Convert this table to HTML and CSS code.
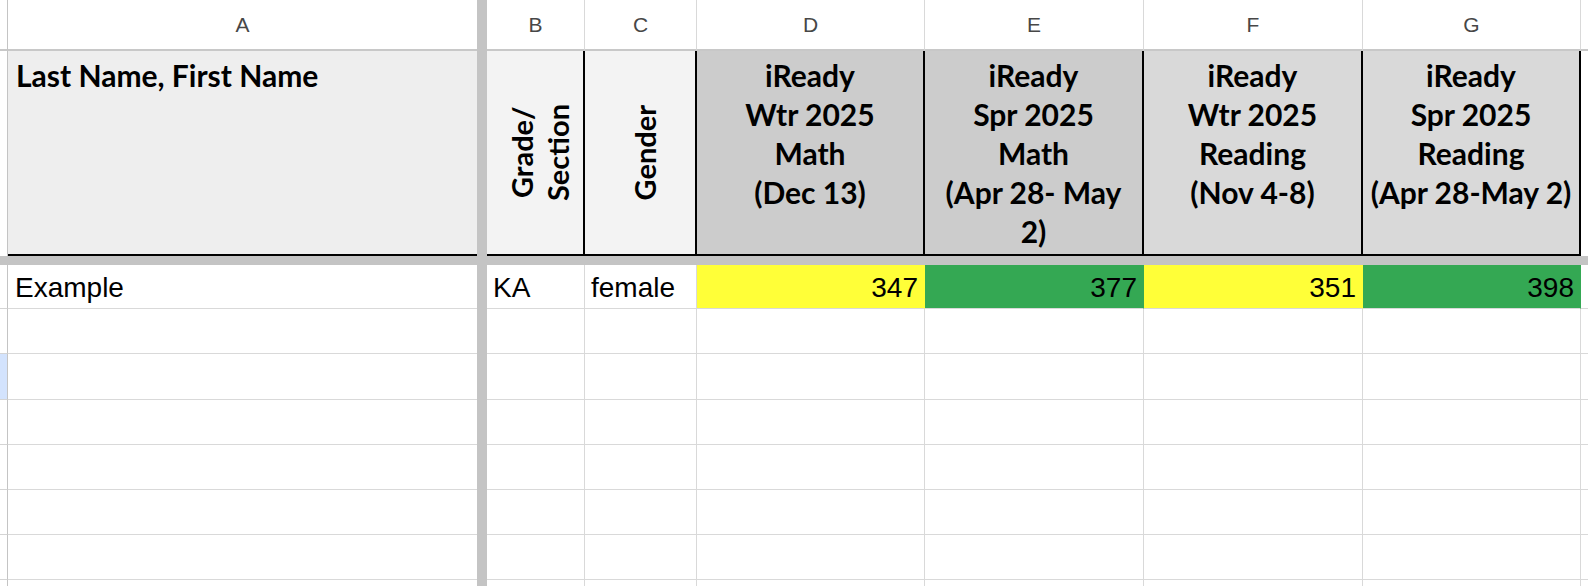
FILE: index.html
```html
<!DOCTYPE html>
<html>
<head>
<meta charset="utf-8">
<title>Sheet</title>
<link rel="stylesheet" href="styles.css">
</head>
<body>
<div class="sheet">
  <!-- column letters -->
  <div class="rh rh-top"></div>
  <div class="colhdr col-a">A</div>
  <div class="colhdr">B</div>
  <div class="colhdr">C</div>
  <div class="colhdr">D</div>
  <div class="colhdr">E</div>
  <div class="colhdr">F</div>
  <div class="colhdr">G</div>
  <div class="colhdr col-h"></div>

  <!-- header row -->
  <div class="rh rh-head"></div>
  <div class="hcell h-a">Last Name, First Name</div>
  <div class="hcell h-rot"><span>Grade/<br>Section</span></div>
  <div class="hcell h-rot"><span>Gender</span></div>
  <div class="hcell h-math">iReady<br>Wtr 2025<br>Math<br>(Dec 13)</div>
  <div class="hcell h-math">iReady<br>Spr 2025<br>Math<br>(Apr 28- May<br>2)</div>
  <div class="hcell h-read">iReady<br>Wtr 2025<br>Reading<br>(Nov 4-8)</div>
  <div class="hcell h-read">iReady<br>Spr 2025<br>Reading<br>(Apr 28-May 2)</div>
  <div class="hcell h-h"></div>

  <!-- data row -->
  <div class="rh"></div>
  <div class="cell a">Example</div>
  <div class="cell">KA</div>
  <div class="cell">female</div>
  <div class="cell num yellow">347</div>
  <div class="cell num green">377</div>
  <div class="cell num yellow">351</div>
  <div class="cell num green">398</div>
  <div class="cell last"></div>

  <div class="rh"></div><div class="cell a"></div><div class="cell"></div><div class="cell"></div><div class="cell"></div><div class="cell"></div><div class="cell"></div><div class="cell"></div><div class="cell last"></div>
  <div class="rh rh-sel"></div><div class="cell a"></div><div class="cell"></div><div class="cell"></div><div class="cell"></div><div class="cell"></div><div class="cell"></div><div class="cell"></div><div class="cell last"></div>
  <div class="rh"></div><div class="cell a"></div><div class="cell"></div><div class="cell"></div><div class="cell"></div><div class="cell"></div><div class="cell"></div><div class="cell"></div><div class="cell last"></div>
  <div class="rh"></div><div class="cell a"></div><div class="cell"></div><div class="cell"></div><div class="cell"></div><div class="cell"></div><div class="cell"></div><div class="cell"></div><div class="cell last"></div>
  <div class="rh"></div><div class="cell a"></div><div class="cell"></div><div class="cell"></div><div class="cell"></div><div class="cell"></div><div class="cell"></div><div class="cell"></div><div class="cell last"></div>
  <div class="rh"></div><div class="cell a"></div><div class="cell"></div><div class="cell"></div><div class="cell"></div><div class="cell"></div><div class="cell"></div><div class="cell"></div><div class="cell last"></div>
  <div class="rh"></div><div class="cell a"></div><div class="cell"></div><div class="cell"></div><div class="cell"></div><div class="cell"></div><div class="cell"></div><div class="cell"></div><div class="cell last"></div>

  <!-- frozen pane separators -->
  <div class="freeze-v"></div>
  <div class="freeze-h"></div>
</div>
</body>
</html>
```

FILE: styles.css
```css
* { box-sizing: border-box; }

html, body {
  margin: 0;
  padding: 0;
  background: #ffffff;
}

body {
  overflow: hidden;
}

.sheet {
  display: grid;
  grid-template-columns: 8px 469px 10px 98px 112px 228px 219px 219px 218px 1fr;
  grid-template-rows: 51px 205px 9px 44px 45px 46px 45px 45px 45px 45px 45px;
  width: 1588px;
  height: 586px;
  overflow: hidden;
}

/* row header strip */
.rh {
  border-right: 1px solid #c4c4c4;
  border-bottom: 1px solid #d4d4d4;
  background: #ffffff;
}
.rh-top { border-bottom: 2px solid #c8c8c8; }
.rh-head { border-bottom: none; }
.rh-sel { background: #d3e3fd; }

/* column letters */
.colhdr {
  display: flex;
  align-items: center;
  justify-content: center;
  border-bottom: 2px solid #c8c8c8;
  border-right: 1px solid #d9d9d9;
  font-family: "Liberation Sans", Arial, sans-serif;
  font-size: 21px;
  color: #474747;
  padding-top: 1px;
}
.colhdr.col-a { border-right: none; }
.colhdr.col-h { border-right: none; }

/* header row */
.hcell {
  font-family: Lato, "Open Sans", sans-serif;
  font-weight: 700;
  font-size: 30px;
  line-height: 39px;
  color: #000000;
  border-bottom: 2px solid #000000;
  border-right: 2px solid #000000;
  white-space: nowrap;
}
.h-a {
  background: #eeeeee;
  border-right: none;
  padding: 5px 8px;
}
.h-rot {
  background: #f3f3f3;
  display: flex;
  align-items: center;
  justify-content: center;
  padding-left: 10px;
  font-size: 29px;
}
.h-rot span {
  writing-mode: vertical-rl;
  transform: rotate(180deg);
  line-height: 36px;
  text-align: center;
}
.h-math {
  background: #cccccc;
  text-align: center;
  padding-top: 5px;
}
.h-read {
  background: #d9d9d9;
  text-align: center;
  padding-top: 5px;
}
.h-h {
  background: #ffffff;
  border: none;
}

/* body cells */
.cell {
  display: flex;
  align-items: flex-end;
  border-right: 1px solid #d9d9d9;
  border-bottom: 1px solid #d9d9d9;
  font-family: "Liberation Sans", Arial, sans-serif;
  font-size: 28px;
  line-height: 32px;
  color: #000000;
  padding: 0 6px 4px 6px;
  white-space: nowrap;
}
.cell.a { border-right: none; padding-left: 7px; }
.cell.last { border-right: none; }
.num { justify-content: flex-end; }
.yellow { background: #ffff38; border-right-color: transparent; }
.green { background: #34a853; border-right-color: transparent; }

/* frozen separators */
.freeze-v {
  grid-column: 3;
  grid-row: 1 / -1;
  background: #c4c4c4;
}
.freeze-h {
  grid-column: 1 / -1;
  grid-row: 3;
  background: #c4c4c4;
}
```
